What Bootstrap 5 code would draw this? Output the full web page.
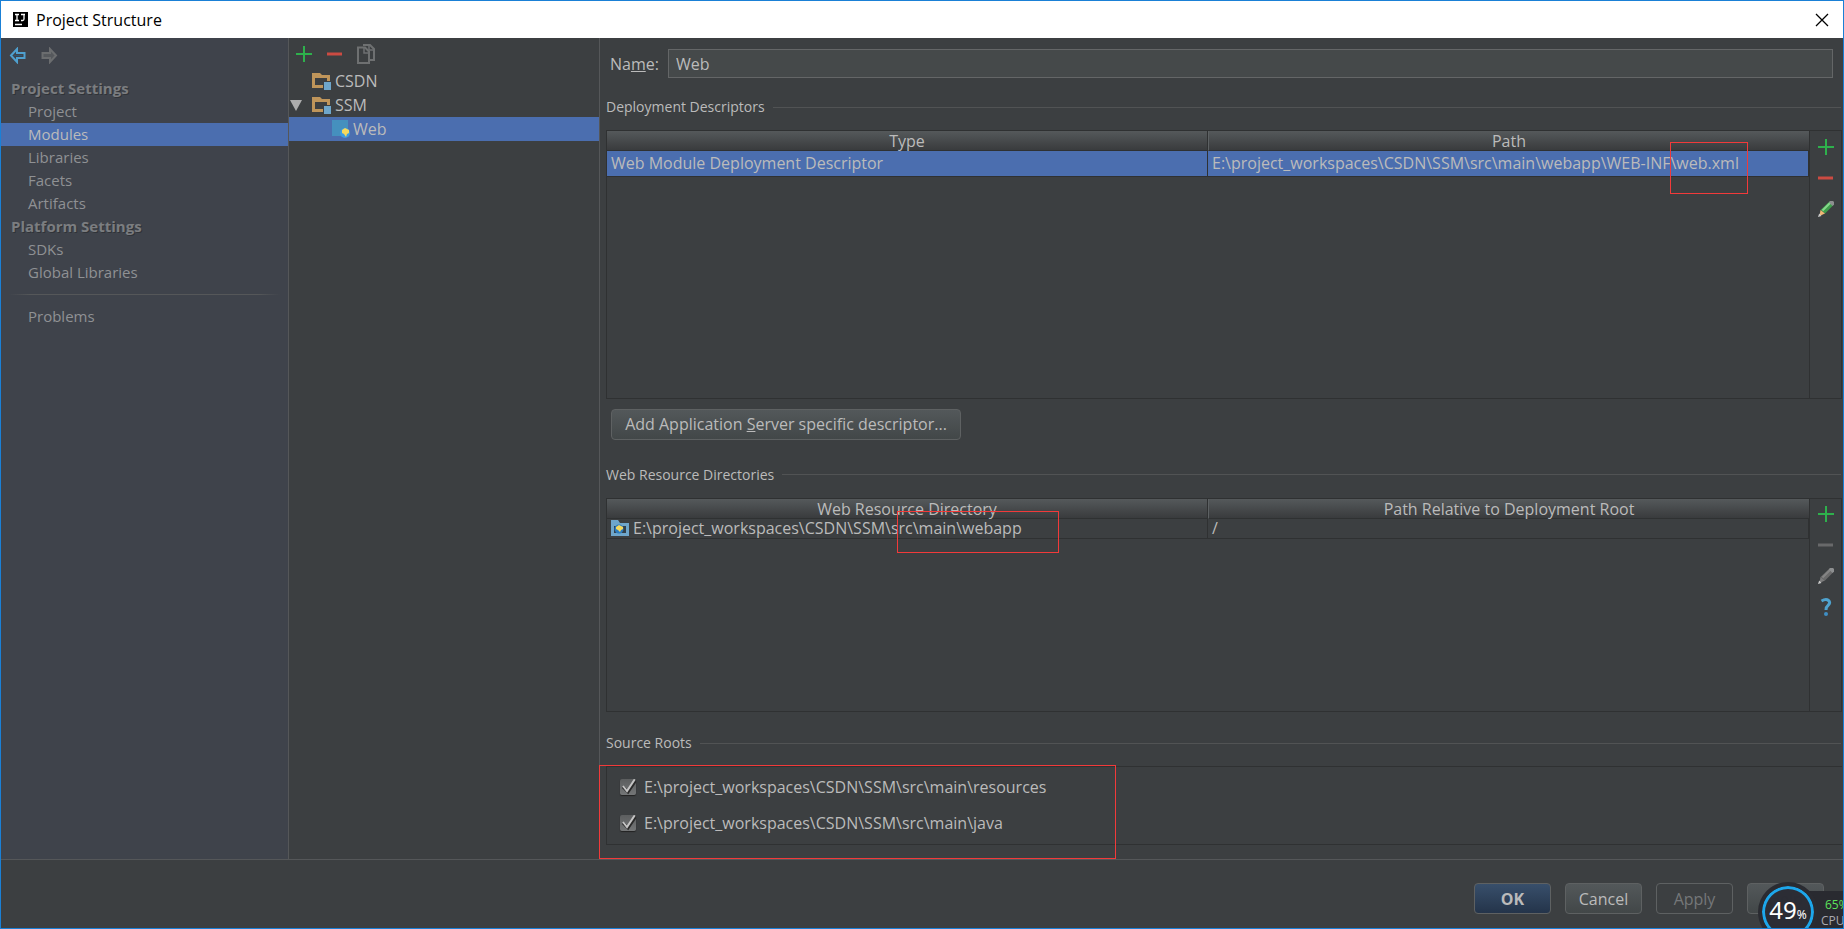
<!DOCTYPE html>
<html lang="en">
<head>
<meta charset="utf-8">
<meta name="viewport" content="width=device-width, initial-scale=1">
<title>Project Structure</title>
<link rel="stylesheet" href="https://cdn.jsdelivr.net/npm/bootstrap@5.3.0/dist/css/bootstrap.min.css">
<style>
:root{--ink:#bbbbbb;--panel:#3c3f41;--rail:#3f434b;--pick:#4b6eaf;--rule:#515354;--dark:#2f3132;--win:#1a80d6}
body{font:16px/22px "Open Sans","Noto Sans",sans-serif;color:var(--ink);background:var(--panel);overflow:hidden}
.window{height:100vh;border:1px solid var(--win)}
.titlebar{height:37px;background:#fff;color:#000;padding:0 14px 0 12px}
.plain{background:none;border:0;padding:0;color:inherit;display:flex;align-items:center;justify-content:center}
svg{display:block;flex:none}
/* left rail */
.rail{width:288px;background:var(--rail);border-right:1px solid #555759;color:#8f9194;font-size:15px;line-height:23px}
.rail-tools{height:39px;padding:9px 0 0 8px;gap:15px;align-items:flex-start}
.rail h2{font-size:15px;line-height:23px;font-weight:700;color:#7b7d80;text-shadow:1px 1px 0 #303338;padding-left:10px;margin:0}
.rail a{display:block;padding-left:27px;color:inherit;text-decoration:none}
.rail a.active{background:var(--pick);color:var(--ink)}
.rail hr{margin:10px 8px;border:0;height:1px;opacity:1;background:linear-gradient(90deg,transparent,#555759 8%,#555759 92%,transparent)}
/* module tree */
.tree{width:311px;border-right:1px solid #555759}
.tree-tools{height:31px;padding-left:6px;gap:13px}
.tree a{height:24px;color:inherit;text-decoration:none;display:flex;align-items:center;gap:3px;padding-left:23px}
.tree a.open{padding-left:1px}
.tree a.active{background:var(--pick);padding-left:43px}
.twist{margin-right:7px}
/* editor */
.editor{padding:11px 1px 14px 6px}
.name-row{padding:0 9px 0 4px;margin-bottom:18px;height:29px}
.name-row label{width:58px}
.name-row input{background:#45494a;border:1px solid #646667;color:inherit;height:29px;padding:0 7px;outline:0}
.group-title{font-size:14px;line-height:22px;margin:0 0 12px;font-weight:400;gap:8px}
.group-title::after{content:"";flex:1;height:1px;background:var(--rule);margin-right:1px}
.grid-box{min-height:0;border:1px solid var(--dark)}
.grid-first{flex:269 1 0}
.grid-second{flex:214 1 0}
.side-tools{width:32px;flex:none;border-left:1px solid var(--dark)}
.side-tools button{height:31px;width:100%}
.data{width:100%;table-layout:fixed;border-collapse:separate;border-spacing:0;line-height:19px}
.data th{height:20px;padding:2px 0 0;font-weight:400;text-align:center;line-height:17px;background:linear-gradient(#55595b,#393b3d);border-bottom:1px solid var(--dark)}
.data td{padding:0 4px;border-bottom:1px solid var(--dark);border-right:1px solid var(--dark);position:relative;white-space:nowrap}
.data th:first-child{border-right:1px solid var(--dark)}
.data th + th{border-left:1px solid #5d6163}
.data tr.picked td{background:var(--pick);height:26px}
.data tr.calm td{height:20px}
.key{height:31px;border:1px solid #5e6162;border-radius:4px;color:var(--ink);background:linear-gradient(#53585a,#424748);line-height:22px;padding:0}
.add-key{width:350px;margin:10px 0 24px 5px}
.source-title{margin-top:20px}
.roots{border:1px solid var(--dark);border-right:0;padding:2px 13px 3px;position:relative}
.roots .line{height:36px;gap:8px}
.tick{appearance:none;width:16px;height:16px;margin:0;border-radius:2px;box-shadow:0 1px 1px #222;background:linear-gradient(#5c5e5f,#747677)}
.tick:checked{background:url("data:image/svg+xml,%3Csvg xmlns='http://www.w3.org/2000/svg' viewBox='0 0 16 16'%3E%3Cpath d='M3 8l5 5 8-12' fill='none' stroke='%232a2a2a' stroke-width='3'/%3E%3Cpath d='M3 7l4 5 8-12' fill='none' stroke='%23c4c4c4' stroke-width='2'/%3E%3C/svg%3E"),linear-gradient(#5c5e5f,#747677)}
/* red callouts lying over the content */
.callout{position:absolute;border:1px solid #f23a3a;pointer-events:none;z-index:2}
.callout-xml{left:462px;top:-9px;width:78px;height:52px}
.callout-webapp{left:290px;top:-8px;width:162px;height:42px}
.callout-roots{left:-8px;top:-2px;width:517px;height:94px}
/* footer */
.footer-bar{border-top:1px solid #555759;padding:23px 19px 14px;gap:14px}
.footer-bar .key{width:77px}
.footer-bar .key-ok{background:linear-gradient(#384f6b,#24344a);font-weight:700}
.footer-bar .key-off{background:none;color:#757779}
.key-help{color:#333}
/* system load gadget on top of the window */
.gadget{position:absolute;right:0;bottom:0;width:85px;height:46px;overflow:hidden;z-index:5}
.gadget-side{position:absolute;left:50px;top:9px;right:0;bottom:0;background:#292a30;font-size:12px;line-height:16px;padding:6px 0 0 13px;color:#a9a9b0;white-space:nowrap}
.gadget-side b{display:block;font-weight:400;color:#5be35b;padding-left:4px}
.gadget-dial{position:absolute;left:0;top:0;width:60px;height:60px;border-radius:50%;background:#2b2c34f5;border:4px solid #2a2b31;box-shadow:inset 0 0 0 3px #1da6ea;color:#fff;font:24px/48px "Noto Sans",sans-serif;text-align:center}
.gadget-dial small{font-size:12px}
</style>
</head>
<body>
<svg width="0" height="0" class="position-absolute" aria-hidden="true">
<defs>
<symbol id="plus" viewBox="0 0 16 16"><path d="M7 0h2v7h7v2H9v7H7V9H0V7h7z" fill="#2eb04c"/></symbol>
<symbol id="minus" viewBox="0 0 16 16"><path d="M0 6.500h15v3H0z" fill="currentColor"/></symbol>
<symbol id="pencil" viewBox="0 0 16 16"><path d="M12 0l4 3.500-9 9L2.500 9z" fill="var(--c1)"/><path d="M12.500 1.500L4.500 9.500" stroke="var(--c2)" stroke-width="2"/><path d="M12 0h3l1 1v2.500l-1.500 1.500L11 1.500z" fill="#8d8f90"/><path d="M2.500 9L7 12.500 1.500 15z" fill="var(--c3)"/><path d="M0 16l1.200-3.500L3.500 15z" fill="#ccc"/></symbol>
<symbol id="folder" viewBox="0 0 20 18"><path d="M0 1h8l2 2h8v13H0zM3 6v7h12V6z" fill="#bf955a" fill-rule="evenodd"/><path d="M11 9h8v8h-8z" fill="#3c3f41"/><path d="M12 10h7v8h-7z" fill="#6ea6cb"/></symbol>
</defs>
</svg>
<div class="window d-flex flex-column position-relative">
  <header class="titlebar d-flex align-items-center flex-shrink-0">
    <svg width="15" height="15" viewBox="0 0 15 15" class="me-2"><path d="M0 0h15v15H0z"/><path d="M2 2.500h4M4 2.500v6M2 8.500h4M8 2.500h4M11 2v5q0 1.500-1.500 1.500H8M2 12.500h7" fill="none" stroke="#fff" stroke-width="1.300"/></svg>
    <span>Project Structure</span>
    <button class="plain ms-auto" aria-label="Close"><svg width="14" height="14" viewBox="0 0 14 14"><path d="M1 1l12 12M13 1L1 13" stroke="#000" stroke-width="1.300"/></svg></button>
  </header>

  <div class="d-flex flex-grow-1" style="min-height:0">
    <nav class="rail flex-shrink-0" aria-label="Settings">
      <div class="rail-tools d-flex">
        <button class="plain" aria-label="Back"><svg width="17" height="17" viewBox="0 0 17 17"><path d="M2 8.500L8 2v4h7.500v5H8v4z" fill="none" stroke="#4fa0cf" stroke-width="2"/><path d="M5 8.500h8" stroke="#2a5672" stroke-width="1"/></svg></button>
        <button class="plain" aria-label="Forward"><svg width="17" height="17" viewBox="0 0 17 17"><path d="M15 8.500L9 2v4H1.500v5H9v4z" fill="#55585c" stroke="#6b6d6f" stroke-width="2"/></svg></button>
      </div>
      <h2>Project Settings</h2>
      <a href="#">Project</a>
      <a href="#" class="active">Modules</a>
      <a href="#">Libraries</a>
      <a href="#">Facets</a>
      <a href="#">Artifacts</a>
      <h2>Platform Settings</h2>
      <a href="#">SDKs</a>
      <a href="#">Global Libraries</a>
      <hr>
      <a href="#">Problems</a>
    </nav>

    <nav class="tree flex-shrink-0" aria-label="Modules">
      <div class="tree-tools d-flex align-items-center">
        <button class="plain" aria-label="Add"><svg width="18" height="16"><use href="#plus"/></svg></button>
        <button class="plain" aria-label="Remove" style="color:#cb4b42"><svg width="18" height="16"><use href="#minus"/></svg></button>
        <button class="plain" aria-label="Copy"><svg width="18" height="20" viewBox="0 0 18 20"><path d="M6 1h7l4 4v11h-4" fill="none" stroke="#6e7071" stroke-width="2"/><path d="M1 3.500h7l4 4V19H1z" fill="#3c3f41" stroke="#6e7071" stroke-width="2"/><path d="M7 3.500V9h5M12 1v5h5" fill="none" stroke="#6e7071" stroke-width="1.500"/></svg></button>
      </div>
      <a href="#"><svg width="20" height="18"><use href="#folder"/></svg>CSDN</a>
      <a href="#" class="open"><svg width="12" height="11" class="twist" viewBox="0 0 12 11"><path d="M0 0h12L6 11z" fill="#adadad"/></svg><svg width="20" height="18"><use href="#folder"/></svg>SSM</a>
      <a href="#" class="active"><svg width="18" height="18" viewBox="0 0 18 18"><path d="M0 0h16v16H0z" fill="#4590be"/><circle cx="13" cy="13" r="5" fill="#3f9ce0"/><path d="M10 10l3-2 4 2v3l-2 1-1 3-2-3-2-1z" fill="#f6d95c"/></svg>Web</a>
    </nav>

    <main class="editor flex-grow-1 d-flex flex-column" style="min-width:0">
      <div class="name-row d-flex align-items-center">
        <label for="mod">Na<u>m</u>e:</label>
        <input id="mod" type="text" value="Web" class="flex-grow-1">
      </div>

      <h3 class="group-title d-flex align-items-center">Deployment Descriptors</h3>
      <div class="grid-box grid-first d-flex">
        <div class="flex-grow-1">
          <table class="data">
            <thead><tr><th>Type</th><th>Path</th></tr></thead>
            <tbody><tr class="picked"><td>Web Module Deployment Descriptor</td><td>E:\project_workspaces\CSDN\SSM\src\main\webapp\WEB-INF\web.xml<span class="callout callout-xml"></span></td></tr></tbody>
          </table>
        </div>
        <div class="side-tools">
          <button class="plain" aria-label="Add descriptor"><svg width="16" height="16"><use href="#plus"/></svg></button>
          <button class="plain" aria-label="Remove descriptor" style="color:#cb4b42"><svg width="16" height="16"><use href="#minus"/></svg></button>
          <button class="plain" aria-label="Edit descriptor" style="--c1:#3f9e4b;--c2:#86d98c;--c3:#f0b775"><svg width="16" height="16"><use href="#pencil"/></svg></button>
        </div>
      </div>
      <button class="key add-key flex-shrink-0">Add Application <u>S</u>erver specific descriptor...</button>

      <h3 class="group-title d-flex align-items-center">Web Resource Directories</h3>
      <div class="grid-box grid-second d-flex">
        <div class="flex-grow-1">
          <table class="data">
            <thead><tr><th>Web Resource Directory</th><th>Path Relative to Deployment Root</th></tr></thead>
            <tbody><tr class="calm"><td><div class="d-flex align-items-center gap-1"><svg width="18" height="16" viewBox="0 0 18 16"><path d="M0 0h7l2 3h9v13H0z" fill="#6ea6cb"/><path d="M3 6h12v7H3z" fill="#34414a"/><circle cx="8" cy="9" r="4.500" fill="#2c7cc0"/><path d="M5 7l3-2 4 2v2l-2 1-1 2-2-2-2-1z" fill="#f6d95c"/></svg>E:\project_workspaces\CSDN\SSM\src\main\webapp</div><span class="callout callout-webapp"></span></td><td>/</td></tr></tbody>
          </table>
        </div>
        <div class="side-tools">
          <button class="plain" aria-label="Add directory"><svg width="16" height="16"><use href="#plus"/></svg></button>
          <button class="plain" aria-label="Remove directory" style="color:#68696a"><svg width="16" height="16"><use href="#minus"/></svg></button>
          <button class="plain" aria-label="Edit directory" style="--c1:#6b6b6b;--c2:#858585;--c3:#7c7c7c"><svg width="16" height="16"><use href="#pencil"/></svg></button>
          <button class="plain" aria-label="Help"><svg width="12" height="18" viewBox="0 0 12 18"><path d="M1.500 3Q6 .5 8.500 2.500T8 7.500Q6 9 6 12" fill="none" stroke="#4fa3cf" stroke-width="3"/><circle cx="6" cy="16" r="2" fill="#3f8fc4"/></svg></button>
        </div>
      </div>

      <h3 class="group-title source-title d-flex align-items-center">Source Roots</h3>
      <div class="roots">
        <div class="line d-flex align-items-center"><input class="tick" type="checkbox" id="r1" checked><label for="r1">E:\project_workspaces\CSDN\SSM\src\main\resources</label></div>
        <div class="line d-flex align-items-center"><input class="tick" type="checkbox" id="r2" checked><label for="r2">E:\project_workspaces\CSDN\SSM\src\main\java</label></div>
        <span class="callout callout-roots"></span>
      </div>
    </main>
  </div>

  <footer class="footer-bar d-flex justify-content-end flex-shrink-0">
    <button class="key key-ok">OK</button>
    <button class="key">Cancel</button>
    <button class="key key-off" disabled>Apply</button>
    <button class="key key-help">Help</button>
  </footer>

  <aside class="gadget" aria-label="System load">
    <div class="gadget-side"><b>65%</b>CPU</div>
    <div class="gadget-dial">49<small>%</small></div>
  </aside>
</div>
<script src="https://cdn.jsdelivr.net/npm/bootstrap@5.3.0/dist/js/bootstrap.bundle.min.js"></script>
</body>
</html>
